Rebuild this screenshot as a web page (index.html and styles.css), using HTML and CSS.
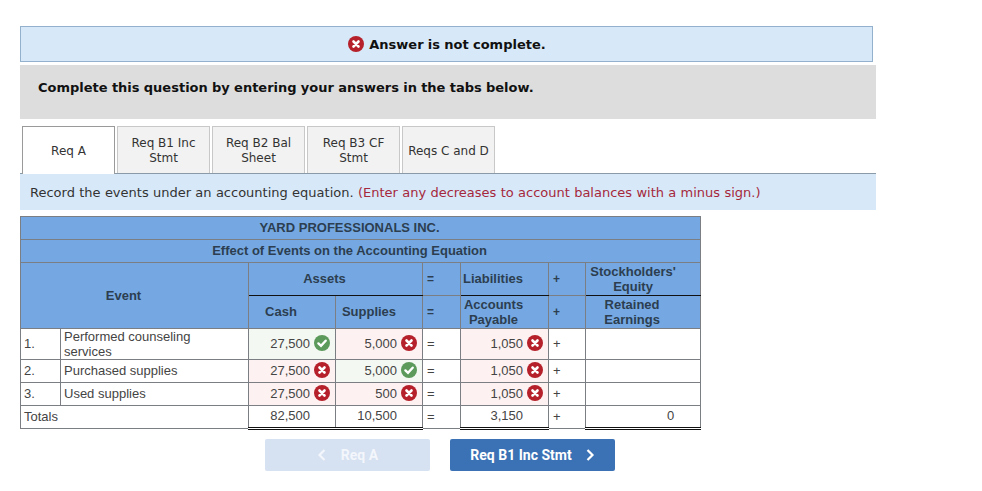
FILE: index.html
```html
<!DOCTYPE html>
<html lang="en">
<head>
<meta charset="utf-8">
<title>Answer is not complete</title>
<link rel="stylesheet" href="styles.css">
</head>
<body>
<svg class="defs" width="0" height="0" aria-hidden="true">
  <symbol id="bad" viewBox="0 0 16 16"><circle cx="8" cy="8" r="8" fill="#b5202a"/><path d="M5.5 5.5l5 5M10.5 5.5l-5 5" stroke="#fff" stroke-width="2.6" fill="none" stroke-linecap="round"/></symbol>
  <symbol id="good" viewBox="0 0 16 16"><circle cx="8" cy="8" r="8" fill="#5b9a5b"/><path d="M4.4 8.4l2.6 2.5 4.7-5.2" stroke="#fff" stroke-width="2.4" fill="none" stroke-linecap="round"/></symbol>
  <symbol id="left" viewBox="0 0 10 14"><path d="M7.5 2L2.5 7l5 5" stroke="currentColor" stroke-width="2.2" fill="none"/></symbol>
  <symbol id="right" viewBox="0 0 10 14"><path d="M2.5 2l5 5-5 5" stroke="currentColor" stroke-width="2.2" fill="none"/></symbol>
</svg>
<main class="page">
  <div class="alert"><svg class="icon"><use href="#bad"/></svg><strong>Answer is not complete.</strong></div>
  <div class="prompt">Complete this question by entering your answers in the tabs below.</div>
  <div class="tabs">
    <div class="tab active">Req A</div>
    <div class="tab">Req B1 Inc<br>Stmt</div>
    <div class="tab">Req B2 Bal<br>Sheet</div>
    <div class="tab">Req B3 CF<br>Stmt</div>
    <div class="tab">Reqs C and D</div>
  </div>
  <p class="instruction">Record the events under an accounting equation. <span class="hint">(Enter any decreases to account balances with a minus sign.)</span></p>
  <table class="sheet">
    <colgroup>
      <col class="c-num"><col class="c-event"><col class="c-money"><col class="c-money"><col class="c-eq"><col class="c-liab"><col class="c-plus"><col class="c-equity">
    </colgroup>
    <thead>
      <tr class="h-title"><th colspan="8">YARD PROFESSIONALS INC.</th></tr>
      <tr class="h-title"><th colspan="8">Effect of Events on the Accounting Equation</th></tr>
      <tr class="h-group">
        <th colspan="2" rowspan="2" class="two">Event</th>
        <th colspan="2" class="dark-b">Assets</th>
        <th class="sym">=</th>
        <th class="dark-b left">Liabilities</th>
        <th class="sym">+</th>
        <th class="dark-b h-equity two">Stockholders'<br>Equity</th>
      </tr>
      <tr class="h-sub">
        <th>Cash</th>
        <th class="h-supplies">Supplies</th>
        <th class="sym">=</th>
        <th class="two">Accounts<br>Payable</th>
        <th class="sym">+</th>
        <th class="two">Retained<br>Earnings</th>
      </tr>
    </thead>
    <tbody>
      <tr class="r-tall">
        <td>1.</td><td class="tight">Performed counseling services</td>
        <td class="ok val">27,500<svg class="icon"><use href="#good"/></svg></td>
        <td class="no val">5,000<svg class="icon"><use href="#bad"/></svg></td>
        <td class="op">=</td>
        <td class="no val">1,050<svg class="icon"><use href="#bad"/></svg></td>
        <td class="op">+</td><td></td>
      </tr>
      <tr>
        <td>2.</td><td>Purchased supplies</td>
        <td class="no val">27,500<svg class="icon"><use href="#bad"/></svg></td>
        <td class="ok val">5,000<svg class="icon"><use href="#good"/></svg></td>
        <td class="op">=</td>
        <td class="no val">1,050<svg class="icon"><use href="#bad"/></svg></td>
        <td class="op">+</td><td></td>
      </tr>
      <tr>
        <td>3.</td><td>Used supplies</td>
        <td class="no val">27,500<svg class="icon"><use href="#bad"/></svg></td>
        <td class="no val">500<svg class="icon"><use href="#bad"/></svg></td>
        <td class="op">=</td>
        <td class="no val">1,050<svg class="icon"><use href="#bad"/></svg></td>
        <td class="op">+</td><td></td>
      </tr>
      <tr class="totals">
        <td colspan="2">Totals</td>
        <td class="sum">82,500</td>
        <td class="sum">10,500</td>
        <td class="op">=</td>
        <td class="sum">3,150</td>
        <td class="op">+</td>
        <td class="sum zero">0</td>
      </tr>
    </tbody>
  </table>
  <div class="nav">
    <button class="btn prev" type="button"><svg class="chev"><use href="#left"/></svg>Req A</button>
    <button class="btn next" type="button">Req B1 Inc Stmt<svg class="chev"><use href="#right"/></svg></button>
  </div>
</main>
</body>
</html>
```
FILE: styles.css
```css
* { box-sizing: border-box; }
html, body { margin: 0; background: #fff; }
body { font-family: "DejaVu Sans", sans-serif; color: #111; overflow: hidden; }
.defs { position: absolute; }
.page { width: 856px; margin-left: 20px; padding-top: 26px; }
.icon { width: 16px; height: 16px; flex: none; }

.alert {
  width: 853px; height: 36px;
  display: flex; align-items: center; justify-content: center; gap: 5px;
  background: #d7e9f9; border: 1px solid #93b1cc;
  font-size: 13px; word-spacing: -0.25px; padding-left: 1px;
}
.prompt {
  height: 54px; margin-top: 3px;
  background: #dddddd; padding: 14px 18px;
  font-size: 13px; word-spacing: -0.27px; font-weight: bold; line-height: 17px;
}

.tabs { display: flex; gap: 2px; height: 48px; margin-top: 7px; padding-left: 2px; border-bottom: 1px solid #8a9aa8; }
.tab {
  width: 93px; height: 47px; padding-top: 2px;
  display: flex; align-items: center; justify-content: center; text-align: center;
  background: #f2f2f2; border: 1px solid #c8c8c8; border-bottom: 0;
  font-size: 12px; line-height: 15px; color: #333;
}
.tab.active { background: #fff; border-color: #9a9a9a; height: 48px; margin-bottom: -1px; position: relative; padding-top: 1px; }

.instruction {
  margin: 0; height: 36px; background: #d7e9f9;
  padding: 10px 10px; font-size: 13px; word-spacing: 0.18px; line-height: 17px; color: #333;
}
.hint { color: #a5283c; }

.sheet {
  width: 680px; margin-top: 6px; table-layout: fixed; border-collapse: collapse;
  font-family: "Liberation Sans", Arial, sans-serif; font-size: 13px; color: #444;
}
.c-num { width: 40px; }
.c-event { width: 188px; }
.c-money { width: 87px; }
.c-eq { width: 38px; }
.c-liab { width: 88px; }
.c-plus { width: 37px; }
.c-equity { width: 115px; }

.sheet th, .sheet td { border: 1px solid #7b7f84; padding: 0; }
.sheet th { background: #75a8e2; color: #2c3e50; font-weight: bold; line-height: 15px; text-align: center; padding: 0 22px 2px 0; }
.h-title { height: 23px; }
.h-group { height: 33px; }
.h-sub { height: 33px; }
.sheet .two { padding-bottom: 0; }
.sheet .h-equity { padding-right: 20px; }
.sheet .h-supplies { padding-right: 20px; }
.sheet .dark-b { border-bottom-color: #111; }
.sheet .h-sub th:not(.sym):not(:first-child) { border-top-color: #111; }
.sheet .left { text-align: left; padding: 0 0 2px 2px; }
.sheet .sym { font-size: 12px; text-align: left; padding: 0 0 0 4px; }

.sheet tbody tr { height: 23px; }
.sheet tbody .r-tall { height: 31px; }
.sheet td { padding: 0 3px 2px; line-height: 15px; }
.sheet .tight { padding: 0 40px 0 3px; }
.sheet .val { text-align: right; white-space: nowrap; vertical-align: top; padding: 2px 5px 0 0; }
.sheet .r-tall .val { padding-top: 6px; }
.sheet .val .icon { margin-left: 4px; vertical-align: -3px; }
.sheet .ok { background: #f4f8f2; }
.sheet .no { background: #fdf2f1; }
.sheet .op { padding-left: 4px; }
.sheet .sum { text-align: right; padding: 0 25px 3px 0; border-top-color: #111; border-bottom: 3px double #111; }
.sheet .zero { padding-right: 26px; }

.nav { display: flex; gap: 20px; margin: 9px 0 0 245px; }
.btn {
  width: 165px; height: 32px; border: 0; border-radius: 2px;
  font-family: Roboto, sans-serif; font-size: 14px; font-weight: bold; color: #fff;
  display: flex; align-items: center; justify-content: center;
}
.prev { background: #d6e1f1; color: #f3f6fb; }
.next { background: #3b72b5; padding-right: 6px; }
.chev { width: 10px; height: 14px; flex: none; }
.prev .chev { margin-right: 14px; }
.next .chev { margin-left: 13px; }
```
